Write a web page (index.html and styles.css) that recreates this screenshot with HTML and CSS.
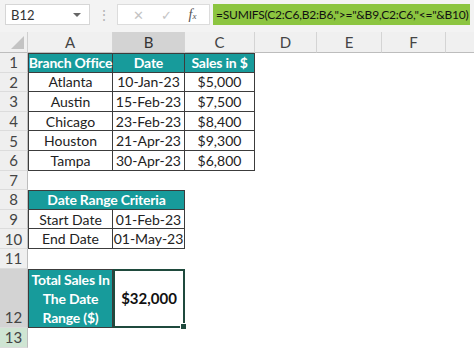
FILE: index.html
```html
<!DOCTYPE html>
<html lang="en">
  <head>
    <meta charset="UTF-8" />
    <meta name="viewport" content="width=device-width, initial-scale=1.0" />
    <title>SUMIFS Date Range</title>
    <link rel="stylesheet" href="styles.css">
  </head>
  <body>
    <!-- name box + formula bar -->
    <div class="bar">
      <div class="nameBox">
        <span>B12</span>
        <span class="caret"></span>
      </div>
      <div class="dots">⋮</div>
      <div class="fxBox">
        <span class="ico">✕</span>
        <span class="ico">✓</span>
        <span class="fx">f<small>x</small></span>
      </div>
      <div class="formula">=SUMIFS(C2:C6,B2:B6,"&gt;="&amp;B9,C2:C6,"&lt;="&amp;B10)</div>
    </div>

    <div class="sheet">
      <!-- column headers -->
      <div class="corner"><span class="tri"></span></div>
      <div class="ch">A</div>
      <div class="ch sel">B</div>
      <div class="ch">C</div>
      <div class="ch">D</div>
      <div class="ch">E</div>
      <div class="ch">F</div>
      <div class="ch last"></div>

      <div class="rh">1</div>
      <div class="cell head top c-a">Branch Office</div>
      <div class="cell head top c-b">Date</div>
      <div class="cell head top c-c">Sales in $</div>

      <div class="rh">2</div>
      <div class="cell c-a">Atlanta</div>
      <div class="cell c-b">10-Jan-23</div>
      <div class="cell c-c">$5,000</div>

      <div class="rh">3</div>
      <div class="cell c-a">Austin</div>
      <div class="cell c-b">15-Feb-23</div>
      <div class="cell c-c">$7,500</div>

      <div class="rh">4</div>
      <div class="cell c-a">Chicago</div>
      <div class="cell c-b">23-Feb-23</div>
      <div class="cell c-c">$8,400</div>

      <div class="rh">5</div>
      <div class="cell c-a">Houston</div>
      <div class="cell c-b">21-Apr-23</div>
      <div class="cell c-c">$9,300</div>

      <div class="rh">6</div>
      <div class="cell c-a">Tampa</div>
      <div class="cell c-b">30-Apr-23</div>
      <div class="cell c-c">$6,800</div>

      <div class="rh">7</div>

      <div class="rh">8</div>
      <div class="cell head top c-ab">Date Range Criteria</div>

      <div class="rh">9</div>
      <div class="cell c-a">Start Date</div>
      <div class="cell c-b">01-Feb-23</div>

      <div class="rh">10</div>
      <div class="cell c-a">End Date</div>
      <div class="cell c-b">01-May-23</div>

      <div class="rh">11</div>

      <div class="rh selRow">12</div>
      <div class="cell head top c-a wrap">Total Sales In<br>The Date<br>Range ($)</div>
      <div class="cell c-b active">
        $32,000
        <span class="handle"></span>
      </div>

      <div class="rh nextRow">13</div>
    </div>
  </body>
</html>
```

FILE: styles.css
```css
body {
  margin: 0;
  background-color: #fff;
  font-family: Lato, "Open Sans", sans-serif;
  color: #222;
  width: 474px;
  height: 350px;
  overflow: hidden;
}

/* top bar */
.bar {
  display: flex;
  align-items: center;
  height: 32px;
  padding: 0 4px 3px 5px;
  box-sizing: border-box;
  background-color: #f3f3f3;
}
.nameBox {
  display: flex;
  align-items: center;
  justify-content: space-between;
  width: 85px;
  height: 21px;
  padding: 0 8px 0 5px;
  box-sizing: border-box;
  background-color: #fff;
  border: 1px solid #d6d6d6;
  font-size: 13px;
  color: #333;
}
.caret {
  width: 0;
  height: 0;
  border-left: 4px solid transparent;
  border-right: 4px solid transparent;
  border-top: 4px solid #666;
}
.dots {
  width: 27px;
  text-align: center;
  color: #b5b5b5;
  font-size: 14px;
}
.fxBox {
  display: flex;
  align-items: center;
  justify-content: space-around;
  width: 93px;
  height: 21px;
  background-color: #fff;
  border: 1px solid #dcdcdc;
  box-sizing: border-box;
  padding: 0 4px 0 6px;
}
.ico {
  color: #c4c4c4;
  font-size: 13px;
}
.fx {
  font-family: "Liberation Serif", serif;
  font-style: italic;
  font-size: 14px;
  color: #555;
}
.fx small {
  font-size: 9px;
}
.formula {
  flex: 1;
  height: 21px;
  margin-left: 3px;
  padding-left: 3px;
  background-color: #8cc540;
  font-size: 12px;
  letter-spacing: -0.2px;
  line-height: 21px;
  color: #111;
  white-space: nowrap;
  overflow: hidden;
}

/* sheet grid */
.sheet {
  display: grid;
  grid-template-columns: 28px 85px 72px 70px 62px 65px 64px 28px;
  grid-template-rows: 21px repeat(11, 19.6px) 59px 20px;
  font-size: 14px;
}
.corner {
  position: relative;
  background-color: #f0f0f0;
  border-right: 1px solid #cfcfcf;
  border-bottom: 1px solid #bdbdbd;
}
.tri {
  position: absolute;
  right: 3px;
  bottom: 3px;
  width: 0;
  height: 0;
  border-left: 13px solid transparent;
  border-bottom: 13px solid #c3c3c3;
}
.ch {
  display: flex;
  align-items: center;
  justify-content: center;
  background-color: #f0f0f0;
  border-right: 1px solid #d4d4d4;
  border-bottom: 1px solid #bdbdbd;
  color: #444;
  font-size: 15px;
}
.ch.sel {
  background-color: #d3d3d3;
  color: #333;
}
.ch.last {
  border-right: none;
}
.rh {
  grid-column: 1;
  display: flex;
  align-items: center;
  justify-content: center;
  background-color: #efefef;
  border-right: 1px solid #bdbdbd;
  border-bottom: 1px solid #dcdcdc;
  box-sizing: border-box;
  color: #444;
  font-size: 15px;
}
.rh.selRow {
  align-items: flex-end;
  background-color: #d3d3d3;
  padding-bottom: 1px;
}
.rh.nextRow {
  background-color: #cfe5d3;
}

/* table cells */
.cell {
  display: flex;
  align-items: center;
  justify-content: center;
  border-right: 1px solid #3c3c3c;
  border-bottom: 1px solid #3c3c3c;
  box-sizing: border-box;
  white-space: nowrap;
}
.c-a {
  grid-column: 2;
  border-left: 1px solid #3c3c3c;
}
.c-b {
  grid-column: 3;
}
.c-c {
  grid-column: 4;
}
.c-ab {
  grid-column: 2 / span 2;
  border-left: 1px solid #3c3c3c;
}
.top {
  border-top: 1px solid #3c3c3c;
}
.head {
  background-color: #179b9b;
  color: #fff;
  font-weight: bold;
  letter-spacing: -0.2px;
}
.wrap {
  text-align: center;
  line-height: 19px;
}
.active {
  position: relative;
  border: 2px solid #1f4a3d;
  font-weight: bold;
  font-size: 15px;
  color: #111;
}
.handle {
  position: absolute;
  right: -4px;
  bottom: -4px;
  width: 5px;
  height: 5px;
  background-color: #1f4a3d;
  border: 1px solid #fff;
}
```
